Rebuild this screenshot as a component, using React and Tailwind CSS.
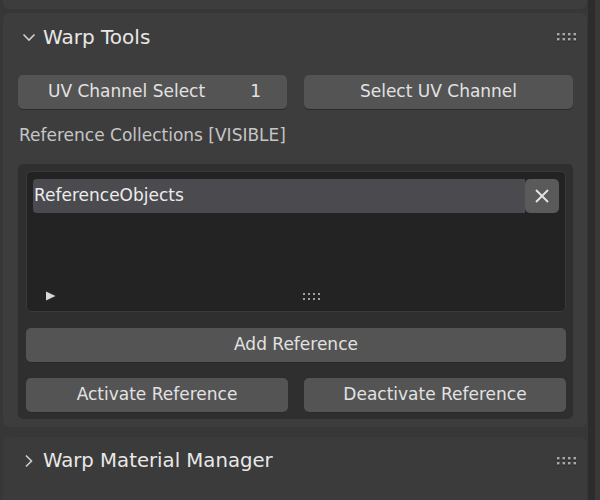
import React from "react";

function Dots({ className = "" }) {
  return (
    <svg width="22" height="10" viewBox="0 0 22 10" className={className}>
      {[0, 1, 2, 3].map((i) =>
        [0, 1].map((j) => (
          <g key={`${i}-${j}`}>
            <rect x={1 + i * 5.5} y={2 + j * 5} width="2.5" height="2.5" fill="#1f1f1f" />
            <rect x={1 + i * 5.5} y={1 + j * 5} width="2.5" height="2.5" fill="#a8a8a8" />
          </g>
        ))
      )}
    </svg>
  );
}

function SmallDots() {
  return (
    <svg width="20" height="9" viewBox="0 0 20 9">
      {[0, 1, 2, 3].map((i) =>
        [0, 1].map((j) => (
          <rect key={`${i}-${j}`} x={1 + i * 5} y={1 + j * 5} width="2" height="2" fill="#a0a0a0" />
        ))
      )}
    </svg>
  );
}

function Btn({ children, className = "", split = false }) {
  return (
    <div
      className={`h-[34px] rounded-[5px] bg-[#545454] text-[#e2e2e2] text-[17px] flex items-center shadow-[0_1px_0_#2a2a2a] ${
        split ? "justify-between pl-[30px] pr-[26px]" : "justify-center"
      } ${className}`}
    >
      {children}
    </div>
  );
}

export default function App() {
  return (
    <div
      className="w-[600px] h-[500px] overflow-hidden bg-[#373737] flex"
      style={{ fontFamily: '"DejaVu Sans", "Liberation Sans", sans-serif' }}
    >
      <div className="w-[588px] flex flex-col">
        <div className="h-[9px] ml-[3px] mr-[1px] bg-[#3d3d3d] rounded-b-[6px]" />
        <div className="mt-[4px] ml-[3px] mr-[1px] bg-[#3d3d3d] rounded-[6px] pl-[15px] pr-[14px] pb-[8px]">
          <div className="h-12 flex items-center">
            <svg width="14" height="10" viewBox="0 0 14 10" className="ml-[4px]">
              <path d="M1.5 2.5 L7 8 L12.5 2.5" fill="none" stroke="#cfcfcf" strokeWidth="1.6" />
            </svg>
            <span className="ml-[7px] text-[20px] text-[#e8e8e8]">Warp Tools</span>
            <Dots className="ml-auto mr-[-5px]" />
          </div>
          <div className="mt-[14px] grid grid-cols-2 gap-[17px]">
            <Btn split>
              <span>UV Channel Select</span>
              <span>1</span>
            </Btn>
            <Btn>Select UV Channel</Btn>
          </div>
          <div className="h-[26px] mt-[14px] flex items-center text-[17px] text-[#c6c6c6] pl-[1px]">
            Reference Collections [VISIBLE]
          </div>
          <div className="mt-[15px] bg-[#2f2f2f] rounded-[5px] pt-[7px] pl-[8px] pr-[7px] pb-[7px]">
            <div className="h-[141px] bg-[#232323] border border-[#3a3a3a] rounded-[5px] pt-[7px] pl-[6px] pr-[6px] flex flex-col">
              <div className="flex h-[34px]">
                <div className="flex-1 bg-[#4a4a4f] rounded-l-[4px] flex items-center text-[17px] text-[#ececec] pl-[1px]">
                  ReferenceObjects
                </div>
                <div className="w-[34px] bg-[#5a5a5a] rounded-[5px] flex items-center justify-center">
                  <svg width="16" height="16" viewBox="0 0 16 16">
                    <path d="M2 2 L14 14 M14 2 L2 14" stroke="#e6e6e6" strokeWidth="1.8" />
                  </svg>
                </div>
              </div>
              <div className="mt-auto mb-[9px] flex items-center h-[12px]">
                <svg width="12" height="10" viewBox="0 0 12 10" className="ml-[12px]">
                  <path d="M1 0.5 L10.5 5 L1 9.5 Z" fill="#d8d8d8" />
                </svg>
                <div className="ml-[245px]">
                  <SmallDots />
                </div>
              </div>
            </div>
            <Btn className="mt-[16px]">Add Reference</Btn>
            <div className="mt-[16px] grid grid-cols-2 gap-[16px]">
              <Btn>Activate Reference</Btn>
              <Btn>Deactivate Reference</Btn>
            </div>
          </div>
        </div>
        <div className="mt-[10px] ml-[3px] mr-[1px] flex-1 bg-[#3b3b3b] rounded-t-[6px] pl-[15px] pr-[14px]">
          <div className="h-[48px] flex items-center">
            <svg width="12" height="14" viewBox="0 0 12 14" className="ml-[5px]">
              <path d="M3 1.5 L8.5 7 L3 12.5" fill="none" stroke="#cfcfcf" strokeWidth="1.6" />
            </svg>
            <span className="ml-[8px] text-[19.7px] text-[#e8e8e8]">Warp Material Manager</span>
            <Dots className="ml-auto mr-[-5px]" />
          </div>
        </div>
      </div>
      <div className="w-[7px] bg-[#2c2c2c]" />
      <div className="w-[5px] bg-[#383838]" />
    </div>
  );
}
